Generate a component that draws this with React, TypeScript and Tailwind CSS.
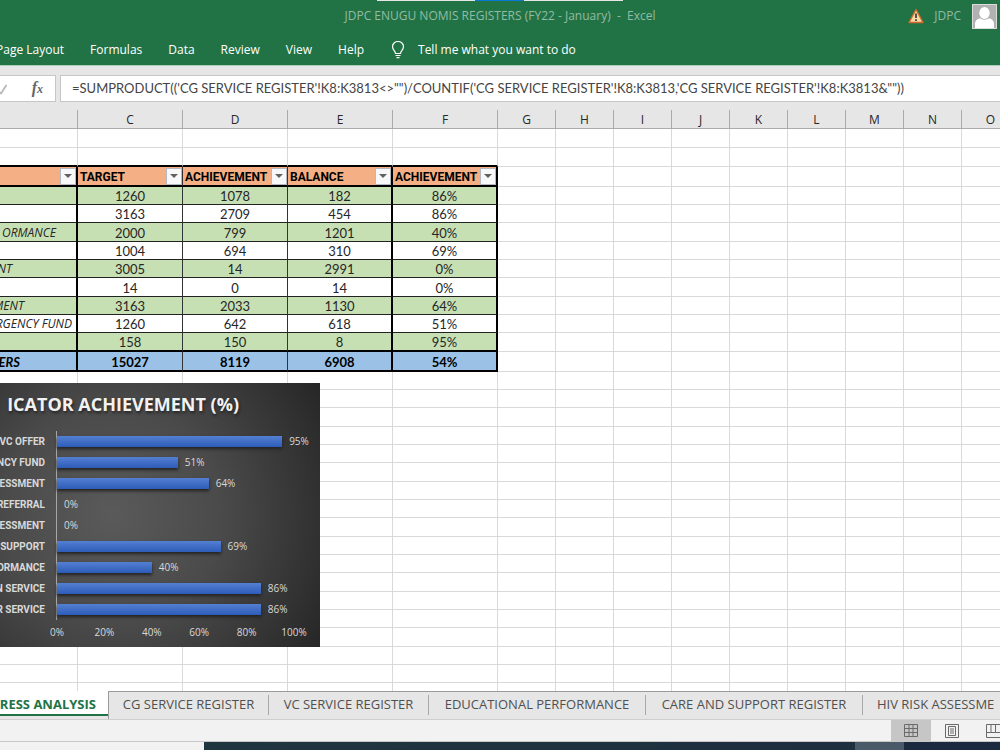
import React from 'react';
import { clsx } from 'clsx';

const ribbonTabs = ['Page Layout', 'Formulas', 'Data', 'Review', 'View', 'Help'];

const columns = [
  { name: '', width: 'w-[78px]' },
  { name: 'C', width: 'w-[105px]' },
  { name: 'D', width: 'w-[105px]' },
  { name: 'E', width: 'w-[105px]' },
  { name: 'F', width: 'w-[105px]' },
  { name: 'G', width: 'w-[58px]' },
  { name: 'H', width: 'w-[58px]' },
  { name: 'I', width: 'w-[58px]' },
  { name: 'J', width: 'w-[58px]' },
  { name: 'K', width: 'w-[58px]' },
  { name: 'L', width: 'w-[58px]' },
  { name: 'M', width: 'w-[58px]' },
  { name: 'N', width: 'w-[58px]' },
  { name: 'O', width: '' },
];

const headings = ['', 'TARGET', 'ACHIEVEMENT', 'BALANCE', 'ACHIEVEMENT (%)'];

const rows = [
  { label: '', pad: 'pr-1', values: ['1260', '1078', '182', '86%'] },
  { label: '', pad: 'pr-1', values: ['3163', '2709', '454', '86%'] },
  { label: 'ORMANCE', pad: 'pr-5', values: ['2000', '799', '1201', '40%'] },
  { label: '', pad: 'pr-1', values: ['1004', '694', '310', '69%'] },
  { label: 'NT', pad: 'pr-16', values: ['3005', '14', '2991', '0%'] },
  { label: '', pad: 'pr-1', values: ['14', '0', '14', '0%'] },
  { label: 'MENT', pad: 'pr-13', values: ['3163', '2033', '1130', '64%'] },
  { label: 'RGENCY FUND', pad: 'pr-1', values: ['1260', '642', '618', '51%'] },
  { label: '', pad: 'pr-1', values: ['158', '150', '8', '95%'] },
];

const totals = ['15027', '8119', '6908', '54%'];

const bars = [
  { label: 'OVC OFFER', value: 95 },
  { label: 'NCY FUND', value: 51 },
  { label: 'SESSMENT', value: 64 },
  { label: 'REFERRAL', value: 0 },
  { label: 'SESSMENT', value: 0 },
  { label: 'SUPPORT', value: 69 },
  { label: 'ORMANCE', value: 40 },
  { label: 'N SERVICE', value: 86 },
  { label: 'R SERVICE', value: 86 },
];

const sheetTabs = [
  { name: 'CG SERVICE REGISTER', width: 'w-[160px]' },
  { name: 'VC SERVICE REGISTER', width: 'w-[160px]' },
  { name: 'EDUCATIONAL PERFORMANCE', width: 'w-[217px]' },
  { name: 'CARE AND SUPPORT REGISTER', width: 'w-[217px]' },
];

// right-hand edge of a table cell: the outer and group edges are heavier
function edge(index: number) {
  return index === 0 || index >= 3
    ? 'border-r-2 border-r-black'
    : 'border-r border-r-[#333333]';
}

function TitleBar() {
  return (
    <div className="relative grid h-8 grid-cols-[1fr_auto_1fr] items-center text-xs text-[#92bba4]">
      <div className="absolute left-1/2 top-0 flex h-px w-[246px] -translate-x-1/2 bg-[#e6e6e6]">
        <div className="ml-[98px] w-[49px] bg-[#0a78d4]" />
      </div>
      <div />
      <h1 className="whitespace-pre">JDPC ENUGU NOMIS REGISTERS (FY22 - January)  -  Excel</h1>
      <div className="flex items-center justify-end pr-[3px]">
        <svg className="mr-2.5 h-4 w-4" viewBox="0 0 16 16" aria-label="Warning">
          <path d="M8 1.5 15 14.5H1Z" fill="#f3d9a4" stroke="#d0672c" strokeWidth="1.4" strokeLinejoin="round" />
          <path d="M8 5.5v4.5M8 11.2v1.8" stroke="#4a4132" strokeWidth="1.8" />
        </svg>
        <span>JDPC</span>
        <svg className="ml-[11px] h-[25px] w-[25px]" viewBox="0 0 25 25" aria-label="Account">
          <path d="M0 0h25v25H0z" fill="#b1b1b1" />
          <ellipse cx="12.5" cy="9" rx="5.2" ry="6" fill="#fff" />
          <path d="M3 25v-5c0-3.500 2.500-5.500 5.500-5.500 2.500 1.700 5.500 1.700 8 0 3 0 5.500 2 5.500 5.500v5z" fill="#fff" />
          <path d="M.5.500h24v24H.5z" fill="none" stroke="#dcdcdc" />
        </svg>
      </div>
    </div>
  );
}

function Ribbon() {
  return (
    <nav className="-ml-1 flex h-[33px] items-center gap-[26px] whitespace-nowrap pt-[3px] text-xs text-white">
      {ribbonTabs.map((tab) => (
        <button key={tab} type="button">{tab}</button>
      ))}
      <button type="button" className="flex items-center gap-3">
        <svg className="h-[18px] w-4" viewBox="0 0 16 18" fill="none" stroke="#fff" strokeWidth="1.2">
          <path d="M5.500 12.500c0-2.500-3-3.500-3-7a5.500 5 0 0 1 11 0c0 3.500-3 4.500-3 7zM5.500 14.500h5M6.500 16.700h3" />
        </svg>
        Tell me what you want to do
      </button>
    </nav>
  );
}

function FormulaBar() {
  return (
    <div className="flex h-[45px] gap-1 border-t border-[#a9cdb8] pb-2 pt-[9px]">
      <div className="flex w-14 items-center justify-between border-y border-r border-[#c6c6c6] bg-white pr-3">
        <svg className="h-3 w-2" viewBox="0 0 8 12" fill="none" stroke="#b8b8b8" strokeWidth="1.800">
          <path d="M-2 8 1 10.500 6.500 2" />
        </svg>
        <button type="button" className="font-['Liberation_Serif',serif] text-base font-bold italic leading-none text-[#666666]">
          f<span className="text-xs">x</span>
        </button>
      </div>
      <input
        aria-label="Formula bar"
        readOnly
        className="min-w-0 flex-1 border-y border-l border-[#c6c6c6] bg-white pl-[11px] font-['Lato',sans-serif] text-[13px] text-[#444444] outline-none"
        value={`=SUMPRODUCT(('CG SERVICE REGISTER'!K8:K3813<>"")/COUNTIF('CG SERVICE REGISTER'!K8:K3813,'CG SERVICE REGISTER'!K8:K3813&""))`}
      />
    </div>
  );
}

function BlankCells({ count }: { count: number }) {
  return (
    <>
      {Array.from({ length: count }).map((_, i) => (
        <td key={i} className="border-b border-r border-[#d9d9d9]" />
      ))}
    </>
  );
}

function FilterButton() {
  return (
    <button
      type="button"
      aria-label="Filter"
      className="flex h-[17px] w-4 shrink-0 items-center justify-center border border-[#b4b8c0] bg-[#f8f8fa]"
    >
      <svg className="h-1 w-2" viewBox="0 0 8 4">
        <path d="M0 0h8L4 4z" fill="#606060" />
      </svg>
    </button>
  );
}

function Sheet() {
  return (
    <table className="w-[102%] table-fixed border-separate border-spacing-0 text-center font-['Lato','Open_Sans',sans-serif] text-[13px] leading-4 text-[#262626]">
      <thead>
        <tr className="h-[19px] font-['Open_Sans',sans-serif] text-xs leading-4">
          {columns.map((column, i) => (
            <th
              key={i}
              scope="col"
              className={clsx('border-b border-r border-[#ababab] bg-[#e6e6e6] p-0 pt-0.5 font-normal', column.width)}
            >
              {column.name}
            </th>
          ))}
        </tr>
      </thead>
      <tbody>
        <tr className="h-[19px]"><BlankCells count={14} /></tr>
        <tr className="h-[19px]">
          {headings.map((_, i) => (
            <td key={i} className="border-b-2 border-r border-b-black border-r-[#d9d9d9]" />
          ))}
          <BlankCells count={9} />
        </tr>
        <tr className="h-5 font-['Roboto',sans-serif] text-xs">
          {headings.map((heading, i) => (
            <th key={i} scope="col" className={clsx('border-b-2 border-b-black bg-[#f4b084] p-0', edge(i))}>
              <div className="flex items-center">
                <span className="min-w-0 flex-1 overflow-hidden whitespace-nowrap pl-0.5 pt-0.5 text-left text-black">{heading}</span>
                <FilterButton />
              </div>
            </th>
          ))}
          <BlankCells count={9} />
        </tr>
      </tbody>
      <tbody className="[&>tr:nth-child(3n)]:h-[19px]">
        {rows.map((row, r) => {
          const line = r === rows.length - 1 ? 'border-b-2 border-b-black' : 'border-b border-b-[#222222]';
          const fill = r % 2 === 0 ? 'bg-[#c6e0b4]' : 'bg-white';
          return (
            <tr key={r} className="h-[18px]">
              <th
                scope="row"
                className={clsx("p-0 align-bottom font-['Open_Sans',sans-serif] text-xs font-normal italic", line, fill, edge(0))}
              >
                <div className={clsx('flex h-4 justify-end overflow-hidden whitespace-nowrap', row.pad)}>{row.label}</div>
              </th>
              {row.values.map((value, i) => (
                <td key={i} className={clsx('p-0 align-bottom', line, fill, edge(i + 1))}>{value}</td>
              ))}
              <BlankCells count={9} />
            </tr>
          );
        })}
      </tbody>
      <tbody>
        <tr className="h-5 font-bold text-black">
          <th scope="row" className={clsx('border-b-2 border-b-black bg-[#9bc2e6] p-0 align-bottom italic', edge(0))}>
            <div className="flex justify-end overflow-hidden pr-14">ERS</div>
          </th>
          {totals.map((value, i) => (
            <td key={i} className={clsx('border-b-2 border-b-black bg-[#9bc2e6] p-0 align-bottom', edge(i + 1))}>{value}</td>
          ))}
          <BlankCells count={9} />
        </tr>
      </tbody>
      <tbody className="[&>tr:nth-child(3n)]:h-[19px]">
        {Array.from({ length: 20 }).map((_, i) => (
          <tr key={i} className="h-[18px]"><BlankCells count={14} /></tr>
        ))}
      </tbody>
    </table>
  );
}

function Chart() {
  return (
    <section className="absolute left-0 top-[273px] h-[264px] w-80 overflow-hidden bg-[radial-gradient(circle_at_35%_50%,#5a5a5a_0%,#4a4a4a_45%,#262626_100%)] text-[10px] text-[#d9d9d9]">
      <h2 className="mt-[7px] w-[239px] whitespace-nowrap text-right text-lg font-bold leading-7 text-[#f2f2f2] [text-shadow:1px_2px_3px_#222222]">
        ICATOR ACHIEVEMENT (%)
      </h2>
      <div className="mt-[13px] grid grid-cols-[57px_237px]">
        <div className="font-['Roboto',sans-serif]">
          {bars.map((bar, i) => (
            <div key={i} className="flex h-[21px] items-center justify-end whitespace-nowrap pr-3 font-bold">{bar.label}</div>
          ))}
        </div>
        <div className="-ml-px border-l border-[#a6a6a6]">
          {bars.map((bar, i) => (
            <div key={i} className="flex h-[21px] items-center">
              <div
                className="h-[11px] shrink-0 bg-linear-to-b from-[#5480d2] to-[#2d5cb8] shadow-[0_2px_3px_#222222]"
                style={{ width: `${bar.value}%` }}
              />
              <span className="pl-[7px]">{bar.value}%</span>
            </div>
          ))}
        </div>
      </div>
      <div className="ml-[57px] mt-[5px] flex w-[237px] justify-between">
        {[0, 20, 40, 60, 80, 100].map((tick) => (
          <span key={tick} className="flex w-0 justify-center">{tick}%</span>
        ))}
      </div>
    </section>
  );
}

function SheetTabs() {
  return (
    <div className="flex h-[29px] shrink-0 items-stretch whitespace-nowrap border-b border-[#cfcfcf] bg-[#e6e6e6] text-[13px] text-[#505050]">
      <div className="w-[108px] pb-[3px]">
        <button
          type="button"
          className="flex h-full w-full items-center justify-end overflow-hidden border-b-2 border-[#217346] bg-white pr-3 pt-1 font-bold text-[#217346]"
        >
          RESS ANALYSIS
        </button>
      </div>
      <div className="flex min-w-0 flex-1 items-center border-l border-t border-[#9b9b9b] pb-0.5">
        {sheetTabs.map((tab) => (
          <button key={tab.name} type="button" className={clsx('h-5 shrink-0 border-r border-[#a8a8a8]', tab.width)}>
            {tab.name}
          </button>
        ))}
        <button type="button" className="h-5 pl-[14px]">HIV RISK ASSESSME</button>
      </div>
    </div>
  );
}

function StatusBar() {
  return (
    <footer className="shrink-0 bg-[#f2f2f2]">
      <div className="flex h-[22px] justify-end overflow-hidden border-b border-[#c8c8c8] text-[#6a6a6a]">
        <button type="button" aria-label="Normal" className="flex w-10 items-center justify-center bg-[#c6c6c6]">
          <svg className="h-[14px] w-[14px]" viewBox="0 0 14 14" fill="none" stroke="currentColor">
            <path d="M.5.500h13v12H.5zM.5 4.500h13M.5 8.500h13M5 .5v12M9 .5v12" />
          </svg>
        </button>
        <button type="button" aria-label="Page Layout" className="flex w-[42px] items-center justify-center">
          <svg className="h-[14px] w-[14px]" viewBox="0 0 14 14" fill="none" stroke="currentColor">
            <path d="M.5.500h13v13H.5zM3.500 2.500h7v9h-7zM5 5h4M5 7h4M5 9h4" />
          </svg>
        </button>
        <button type="button" aria-label="Page Break Preview" className="flex w-[27px] items-center justify-end overflow-hidden">
          <svg className="h-[14px] w-[14px]" viewBox="0 0 14 14" fill="none" stroke="currentColor">
            <path d="M14 .5H.5v13H14M.5 8.500h9V.5M5 .5v8M9.500 8.500H14" />
          </svg>
        </button>
      </div>
      <div className="flex h-2">
        <div className="w-[204px]" />
        <div className="flex-1 bg-linear-to-r from-[#20363f] to-[#1e2f40]" />
        <div className="w-[49px] bg-[#4b5a69]" />
        <div className="w-24 bg-[#1c2a40]" />
      </div>
    </footer>
  );
}

export default function App() {
  return (
    <div className="flex h-screen flex-col overflow-hidden bg-white font-['Open_Sans','Noto_Sans',sans-serif]">
      <header className="shrink-0 bg-[#e6e6e6]">
        <div className="bg-[#217346]">
          <TitleBar />
          <Ribbon />
        </div>
        <FormulaBar />
      </header>
      <main className="relative min-h-0 flex-1 overflow-hidden">
        <Sheet />
        <Chart />
      </main>
      <SheetTabs />
      <StatusBar />
    </div>
  );
}
